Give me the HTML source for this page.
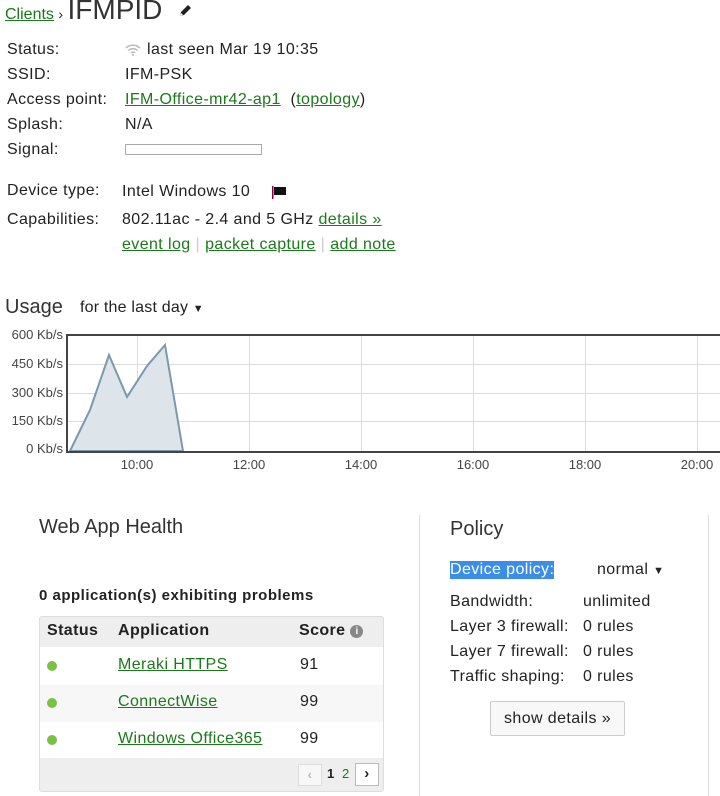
<!DOCTYPE html>
<html><head><meta charset="utf-8"><style>
body{margin:0;width:720px;height:796px;overflow:hidden;background:#fff;font-family:"Liberation Sans",sans-serif;color:#222;font-size:16px;letter-spacing:0.4px;position:relative}
.a{position:absolute;white-space:nowrap}
a{color:#1a7a1a;text-decoration:underline}
.sep{color:#ccc;margin:0 5px}
.gl{position:absolute;background:#ddd}
.yl{position:absolute;right:657px;font-size:13px;letter-spacing:0;color:#444;text-align:right}
.xl{position:absolute;top:457px;font-size:13px;letter-spacing:0;color:#444;width:50px;text-align:center}
</style></head><body>
<div class="a" style="left:5px;top:-6px;letter-spacing:0"><a style="font-size:16px">Clients</a> <span style="font-size:14px">›</span> <span style="font-size:28px;font-weight:300;color:#333">IFMPID</span></div>
<svg class="a" style="left:178px;top:4px" width="14" height="14" viewBox="0 0 14 14"><path d="M2 12l1-4 7-7 3 3-7 7z" fill="#222"/><path d="M2 12l1-3 2 2z" fill="#fff"/></svg>

<div class="a" style="left:7px;top:41px">Status:</div>
<svg class="a" style="left:125px;top:43px" width="16" height="13" viewBox="0 0 16 13"><path d="M1 5a10 10 0 0 1 14 0M3.5 7.5a6.5 6.5 0 0 1 9 0M6 10a3 3 0 0 1 4 0" stroke="#bbb" stroke-width="1.6" fill="none"/><circle cx="8" cy="12" r="1" fill="#bbb"/></svg>
<div class="a" style="left:147px;top:41px">last seen Mar 19 10:35</div>
<div class="a" style="left:7px;top:66px">SSID:</div><div class="a" style="left:125px;top:66px">IFM-PSK</div>
<div class="a" style="left:7px;top:91px">Access point:</div><div class="a" style="left:125px;top:91px"><a>IFM-Office-mr42-ap1</a>&nbsp; (<a>topology</a>)</div>
<div class="a" style="left:7px;top:116px">Splash:</div><div class="a" style="left:125px;top:116px">N/A</div>
<div class="a" style="left:7px;top:141px">Signal:</div><div class="a" style="left:125px;top:144px;width:135px;height:9px;border:1px solid #aaa"></div>
<div class="a" style="left:7px;top:182px">Device type:</div><div class="a" style="left:122px;top:183px">Intel Windows 10</div>
<svg class="a" style="left:272px;top:186px" width="16" height="13" viewBox="0 0 16 13"><rect x="0" y="0" width="1.5" height="13" fill="#804"/><path d="M2 1h12v8H2z" fill="#111"/></svg>
<div class="a" style="left:7px;top:211px">Capabilities:</div><div class="a" style="left:122px;top:211px">802.11ac - 2.4 and 5 GHz <a>details »</a></div>
<div class="a" style="left:122px;top:236px"><a>event log</a><span class="sep">|</span><a>packet capture</a><span class="sep">|</span><a>add note</a></div>

<div class="a" style="left:5px;top:296px;font-size:20px;letter-spacing:0;font-weight:300;color:#333">Usage</div>
<div class="a" style="left:80px;top:299px;font-size:16px;letter-spacing:0.2px">for the last day <span style="font-size:11px">▼</span></div>

<div class="yl" style="top:327px">600 Kb/s</div>
<div class="yl" style="top:356px">450 Kb/s</div>
<div class="yl" style="top:385px">300 Kb/s</div>
<div class="yl" style="top:413px">150 Kb/s</div>
<div class="yl" style="top:441px">0 Kb/s</div>
<div class="gl" style="left:67px;width:653px;top:364px;height:1px"></div>
<div class="gl" style="left:67px;width:653px;top:393px;height:1px"></div>
<div class="gl" style="left:67px;width:653px;top:421px;height:1px"></div>
<div class="gl" style="left:137px;top:336px;width:1px;height:115px"></div>
<div class="gl" style="left:249px;top:336px;width:1px;height:115px"></div>
<div class="gl" style="left:361px;top:336px;width:1px;height:115px"></div>
<div class="gl" style="left:473px;top:336px;width:1px;height:115px"></div>
<div class="gl" style="left:585px;top:336px;width:1px;height:115px"></div>
<div class="gl" style="left:697px;top:336px;width:1px;height:115px"></div>
<svg class="a" style="left:0;top:0" width="720" height="460"><polygon points="70,451 90,410 109,355 127,397 147,366 165,345 183,451" fill="#dde5ea" stroke="#7a9aab" stroke-width="2"/></svg>
<div class="a" style="left:66px;top:334px;width:660px;height:115px;border:2px solid #444;border-right:none"></div>
<div class="xl" style="left:112px">10:00</div><div class="xl" style="left:224px">12:00</div><div class="xl" style="left:336px">14:00</div><div class="xl" style="left:448px">16:00</div><div class="xl" style="left:560px">18:00</div><div class="xl" style="left:672px">20:00</div>

<div class="a" style="left:39px;top:516px;font-size:20px;letter-spacing:0;font-weight:300;color:#333">Web App Health</div>
<div class="a" style="left:39px;top:587px;font-weight:bold;font-size:15px;letter-spacing:0.5px">0 application(s) exhibiting problems</div>
<div class="a" style="left:39px;top:616px;width:343px;height:174px;border:1px solid #ddd;border-radius:3px;background:#eee"></div>
<div class="a" style="left:40px;top:647px;width:343px;height:111px;background:#fff"></div>
<div class="a" style="left:40px;top:685px;width:343px;height:37px;background:#f7f7f7"></div>
<div class="a" style="left:47px;top:622px;font-weight:bold">Status</div>
<div class="a" style="left:118px;top:622px;font-weight:bold">Application</div>
<div class="a" style="left:299px;top:622px;font-weight:bold">Score <span style="display:inline-block;width:13px;height:13px;border-radius:50%;background:#888;color:#fff;font-size:10px;letter-spacing:0;text-align:center;line-height:13px;vertical-align:1px">i</span></div>
<div class="a" style="left:47px;top:661px;width:10px;height:10px;border-radius:50%;background:#7ac143"></div>
<div class="a" style="left:47px;top:698px;width:10px;height:10px;border-radius:50%;background:#7ac143"></div>
<div class="a" style="left:47px;top:735px;width:10px;height:10px;border-radius:50%;background:#7ac143"></div>
<div class="a" style="left:118px;top:656px"><a>Meraki HTTPS</a></div><div class="a" style="left:300px;top:656px">91</div>
<div class="a" style="left:118px;top:693px"><a>ConnectWise</a></div><div class="a" style="left:300px;top:693px">99</div>
<div class="a" style="left:118px;top:730px"><a>Windows Office365</a></div><div class="a" style="left:300px;top:730px">99</div>
<div class="a" style="left:298px;top:764px;width:22px;height:20px;border:1px solid #ddd;background:#f7f7f7;color:#bbb;text-align:center;font-size:13px;line-height:20px;font-weight:bold">‹</div>
<div class="a" style="left:327px;top:766px;font-size:13px;font-weight:bold">1</div>
<div class="a" style="left:342px;top:766px;font-size:13px;color:#1a7a1a">2</div>
<div class="a" style="left:355px;top:763px;width:22px;height:21px;border:1px solid #bbb;background:#fff;text-align:center;font-size:15px;line-height:20px;font-weight:bold">›</div>

<div class="a" style="left:419px;top:515px;width:1px;height:281px;background:#ddd"></div>
<div class="a" style="left:708px;top:515px;width:1px;height:281px;background:#ddd"></div>
<div class="a" style="left:450px;top:518px;font-size:20px;letter-spacing:0;font-weight:300;color:#333">Policy</div>
<div class="a" style="left:450px;top:561px;background:#3b8ee8;color:#fff">Device policy:</div>
<div class="a" style="left:597px;top:561px">normal <span style="font-size:11px">▼</span></div>
<div class="a" style="left:450px;top:593px">Bandwidth:</div><div class="a" style="left:583px;top:593px">unlimited</div>
<div class="a" style="left:450px;top:618px">Layer 3 firewall:</div><div class="a" style="left:583px;top:618px">0 rules</div>
<div class="a" style="left:450px;top:643px">Layer 7 firewall:</div><div class="a" style="left:583px;top:643px">0 rules</div>
<div class="a" style="left:450px;top:668px">Traffic shaping:</div><div class="a" style="left:583px;top:668px">0 rules</div>
<div class="a" style="left:490px;top:701px;width:133px;height:33px;border:1px solid #ccc;border-radius:2px;background:#f8f8f8;text-align:center;line-height:33px">show details »</div>
</body></html>
